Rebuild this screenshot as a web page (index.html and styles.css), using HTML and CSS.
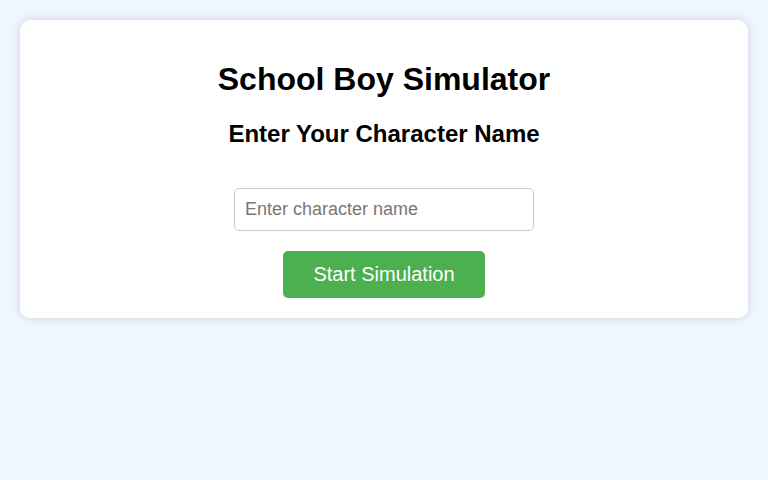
FILE: index.html
```html
<!DOCTYPE html>
<html lang="en">
<head>
  <meta charset="UTF-8" />
  <meta name="viewport" content="width=device-width, initial-scale=1.0" />
  <title>School Boy Simulator</title>
  <link rel="stylesheet" href="styles.css">
</head>
<body>
  <div class="container">
    <h1>School Boy Simulator</h1>
    <h2>Enter Your Character Name</h2>

    <div class="name-form">
      <input type="text" id="character-name" placeholder="Enter character name" />
      <button type="button">Start Simulation</button>
    </div>
  </div>
</body>
</html>
```

FILE: styles.css
```css
body {
  font-family: "Liberation Sans", Arial, sans-serif;
  background-color: #f0f6ff;
  margin: 0;
  padding: 20px;
}
.container {
  background: #fff;
  padding: 20px;
  border-radius: 10px;
  box-shadow: 0 0 10px rgba(0,0,0,0.15);
  text-align: center;
}
h1 {
  font-size: 2em;
  margin: 0.67em 0;
}
h2 {
  font-size: 1.5em;
  margin: 0.83em 0;
}
.name-form {
  display: flex;
  flex-direction: column;
  align-items: center;
  gap: 20px;
  padding-top: 20px;
}
.name-form input {
  width: 300px;
  box-sizing: border-box;
  padding: 10px;
  font-size: 18px;
  font-family: inherit;
  border: 1px solid #ccc;
  border-radius: 5px;
}
.name-form input::placeholder {
  color: #777;
}
button {
  padding: 12px 30px;
  font-size: 20px;
  font-family: inherit;
  border: none;
  border-radius: 5px;
  background-color: #4caf50;
  color: white;
  cursor: pointer;
}
button:hover {
  background-color: #3d8b40;
}
```
